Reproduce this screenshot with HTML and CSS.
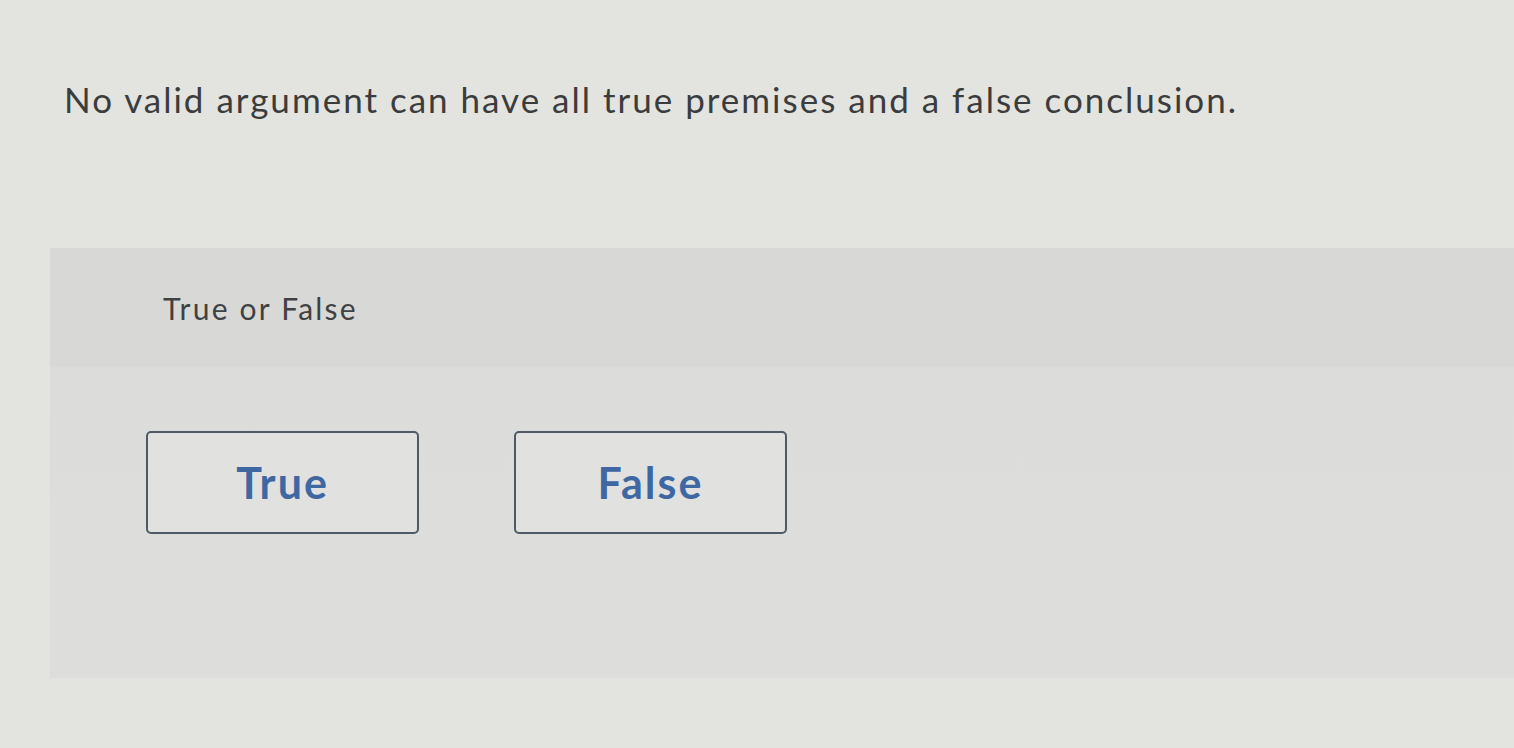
FILE: index.html
```html
<!DOCTYPE html>
<html lang="en">

<head>
    <meta charset="UTF-8">
    <meta name="viewport" content="width=device-width, initial-scale=1.0">
    <title>Question</title>
    <link rel="stylesheet" href="styles.css">
</head>

<body>
    <main class="question">
        <p class="prompt">No valid argument can have all true premises and a false conclusion.</p>

        <section class="answer-box">
            <p class="answer-label">True or False</p>
            <div class="choices">
                <button class="choice">True</button>
                <button class="choice">False</button>
            </div>
        </section>
    </main>
</body>

</html>
```

FILE: styles.css
```css
body {
    margin: 0;
    background-color: #e3e4df;
    font-family: Lato, "Open Sans", sans-serif;
    color: #3b3c3d;
    overflow: hidden;
}

.question {
    padding-top: 78px;
    padding-left: 50px;
}

.prompt {
    margin: 0 0 0 14px;
    font-size: 35px;
    line-height: 42px;
    letter-spacing: 2px;
}

.answer-box {
    margin-top: 128px;
    height: 430px;
    background: linear-gradient(to bottom, #d8d9d7 0, #d8d9d7 118px, #dcdddb 120px, #dddedc 100%);
    padding: 40px 0 0 96px;
    box-sizing: border-box;
}

.answer-label {
    margin: 0 0 0 17px;
    font-size: 30px;
    line-height: 40px;
    letter-spacing: 2.2px;
    color: #404142;
}

.choices {
    display: flex;
    gap: 95px;
    margin-top: 103px;
}

.choice {
    width: 273px;
    height: 103px;
    border: 2px solid #4f5a66;
    border-radius: 5px;
    background-color: #e1e2df;
    font-family: Lato, "Open Sans", sans-serif;
    font-weight: bold;
    font-size: 43px;
    letter-spacing: 2px;
    color: #3f68a3;
    cursor: pointer;
}
```
